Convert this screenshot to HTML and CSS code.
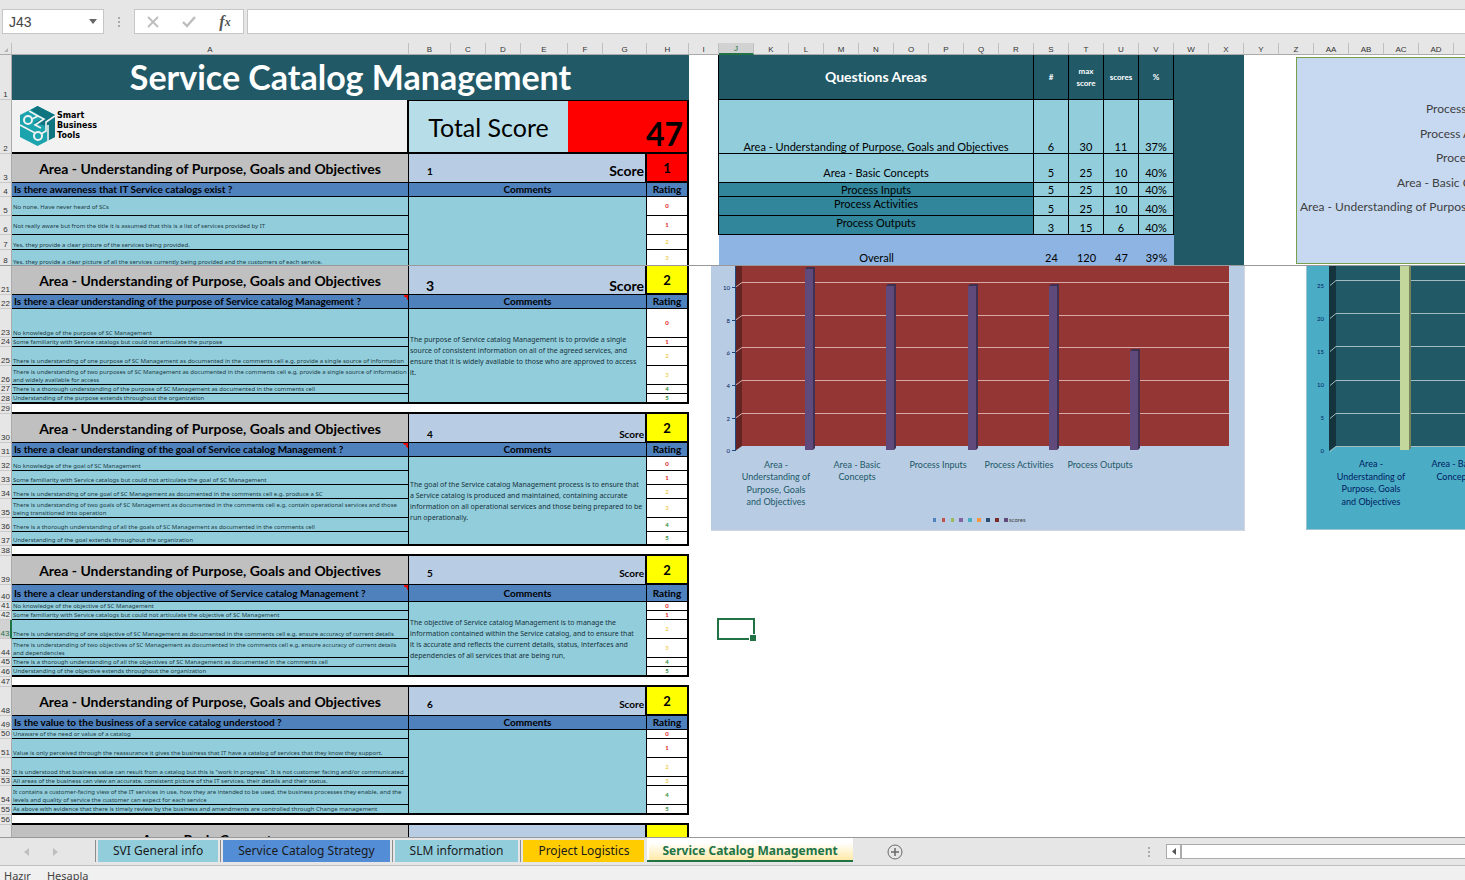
FILE: index.html
```html
<!DOCTYPE html>
<html lang="en">
<head>
    <meta charset="UTF-8">
    <meta name="viewport" content="width=device-width, initial-scale=1.0">
    <title>Service Catalog Management</title>
    <link rel="stylesheet" href="styles.css">
</head>
<body>
    <!-- Formula bar -->
    <header class="formula-bar">
        <div class="name-box">
            <input type="text" value="J43" aria-label="Name box">
            <button type="button" class="name-toggle" aria-label="Open name list"><svg width="8" height="5" viewBox="0 0 8 5"><path d="M0 0h8L4 5z" fill="#666"/></svg></button>
        </div>
        <svg class="grip" width="2" height="10" viewBox="0 0 2 10"><path d="M0 0h2v2H0zM0 4h2v2H0zM0 8h2v2H0z" fill="#aaa"/></svg>
        <div class="formula-buttons">
            <button type="button" aria-label="Cancel"><svg width="12" height="12" viewBox="0 0 12 12"><path d="M1 1l10 10M11 1L1 11" stroke="#bdbdbd" stroke-width="1.8"/></svg></button>
            <button type="button" aria-label="Enter"><svg width="14" height="12" viewBox="0 0 14 12"><path d="M1 6l4 4 8-9" fill="none" stroke="#bdbdbd" stroke-width="2.4"/></svg></button>
            <button type="button" class="fx" aria-label="Insert function"><i>f</i><sub>x</sub></button>
        </div>
        <input type="text" class="formula-input" aria-label="Formula">
    </header>

    <!-- Frozen rows -->
    <section class="pane frozen">
        <table class="sheet wide">
            <colgroup>
                <col class="w-num"><col class="w-a"><col class="w-b"><col class="w-c"><col class="w-c"><col class="w-e"><col class="w-c"><col class="w-g"><col class="w-b"><col class="w-i">
                <col class="w-c" span="22">
            </colgroup>
            <thead>
                <tr class="letters">
                    <th class="corner"><svg width="4" height="4" viewBox="0 0 4 4"><path d="M4 0v4H0z" fill="#b5b5b5"/></svg></th>
                    <th>A</th><th>B</th><th>C</th><th>D</th><th>E</th><th>F</th><th>G</th><th>H</th><th>I</th>
                    <th class="active">J</th><th>K</th><th>L</th><th>M</th><th>N</th><th>O</th><th>P</th><th>Q</th><th>R</th>
                    <th>S</th><th>T</th><th>U</th><th>V</th><th>W</th><th>X</th><th>Y</th><th>Z</th>
                    <th>AA</th><th>AB</th><th>AC</th><th>AD</th><th></th>
                </tr>
            </thead>
            <tbody>
                <tr class="h45">
                    <th>1</th>
                    <td class="title" colspan="8">Service Catalog Management</td>
                    <td class="edge"></td>
                    <td class="q-head q-title" colspan="9">Questions Areas</td>
                    <td class="q-head">#</td><td class="q-head">max score</td><td class="q-head">scores</td><td class="q-head">%</td>
                    <td class="q-side" colspan="2" rowspan="8"></td>
                </tr>
                <tr class="h54">
                    <th>2</th>
                    <td class="brand">
                        <div class="logo">
                            <svg width="37" height="40" viewBox="0 0 37 40">
                                <path d="M18.500 0L36 9v22L18.500 40 1 31V9z" fill="#1ba3ae"/>
                                <path d="M12 4l6.500-4L36 9v22l-8 4V20l-13-3 9-5z" fill="#0e7480"/>
                                <path d="M13 13l6-3 6 3-9 6 6 3M10 5l9 5M1 19l17 9M22 28l5-3V16l9-6M29 19v17" fill="none" stroke="#f2f2f2" stroke-width="1.600"/>
                                <circle cx="9" cy="14" r="4" fill="#1ba3ae" stroke="#f2f2f2" stroke-width="2"/>
                                <circle cx="19" cy="30" r="4" fill="#1ba3ae" stroke="#f2f2f2" stroke-width="2"/>
                            </svg>
                            <span>Smart<br>Business<br>Tools</span>
                        </div>
                    </td>
                    <td class="total" colspan="4">Total Score</td>
                    <td class="total-value" colspan="3">47</td>
                    <td class="edge"></td>
                    <td class="q-name" colspan="9">Area - Understanding of Purpose, Goals and Objectives</td>
                    <td class="q-num">6</td><td class="q-num">30</td><td class="q-num">11</td><td class="q-num">37%</td>
                </tr>
                <tr class="h29 lifted">
                    <th>3</th>
                    <td class="area">Area - Understanding of Purpose, Goals and Objectives</td>
                    <td class="band number">1</td><td class="band score big" colspan="5">Score</td><td class="value red">1</td>
                    <td class="edge"></td>
                    <td class="q-name" colspan="9">Area - Basic Concepts</td>
                    <td class="q-num">5</td><td class="q-num">25</td><td class="q-num">10</td><td class="q-num">40%</td>
                </tr>
                <tr class="h14">
                    <th>4</th>
                    <td class="question">Is there awareness that IT Service catalogs exist ?</td>
                    <td class="caption" colspan="6">Comments</td><td class="caption rating-head">Rating</td>
                    <td class="edge"></td>
                    <td class="q-name q-dark" colspan="9">Process Inputs</td>
                    <td class="q-num">5</td><td class="q-num">25</td><td class="q-num">10</td><td class="q-num">40%</td>
                </tr>
                <tr class="h19">
                    <th>5</th>
                    <td class="answer middle">No none. Have never heard of SCs</td>
                    <td class="comment" colspan="6" rowspan="4"></td><td class="rating r-low">0</td>
                    <td class="edge"></td>
                    <td class="q-name q-dark" colspan="9">Process Activities</td>
                    <td class="q-num">5</td><td class="q-num">25</td><td class="q-num">10</td><td class="q-num">40%</td>
                </tr>
                <tr class="h19">
                    <th>6</th>
                    <td class="answer middle">Not really aware but from the title it is assumed that this is a list of services provided by IT</td>
                    <td class="rating r-low">1</td>
                    <td class="edge"></td>
                    <td class="q-name q-dark" colspan="9">Process Outputs</td>
                    <td class="q-num">3</td><td class="q-num">15</td><td class="q-num">6</td><td class="q-num">40%</td>
                </tr>
                <tr class="h15">
                    <th>7</th>
                    <td class="answer">Yes, they provide a clear picture of the services being provided.</td>
                    <td class="rating r-mid">2</td>
                    <td></td>
                    <td class="q-total" colspan="9" rowspan="2">Overall</td>
                    <td class="q-total" rowspan="2">24</td><td class="q-total" rowspan="2">120</td><td class="q-total" rowspan="2">47</td><td class="q-total" rowspan="2">39%</td>
                </tr>
                <tr class="h16">
                    <th>8</th>
                    <td class="answer last-frozen">Yes, they provide a clear picture of all the services currently being provided and the customers of each service.</td>
                    <td class="rating r-mid last-frozen">3</td>
                    <td></td>
                </tr>
            </tbody>
        </table>
        <svg class="chart chart-areas" width="200" height="207" viewBox="0 0 200 207">
            <rect x="0.500" y="0.500" width="220" height="206" fill="#c6d9f1" stroke="#77a04a"/>
            <text x="130" y="56">Process Outputs</text>
            <text x="124" y="81">Process Activities</text>
            <text x="140" y="105">Process Inputs</text>
            <text x="101" y="130">Area - Basic Concepts</text>
            <text x="4" y="154">Area - Understanding of Purpose, Goals and Objectives</text>
        </svg>
    </section>

    <!-- Scrolling rows -->
    <main class="pane scrolling">
        <table class="sheet">
            <colgroup>
                <col class="w-num"><col class="w-a"><col class="w-b"><col class="w-c"><col class="w-c"><col class="w-e"><col class="w-c"><col class="w-g"><col class="w-b">
            </colgroup>
            <tbody>
                <tr class="h29"><th>21</th><td class="area">Area - Understanding of Purpose, Goals and Objectives</td><td class="band number big">3</td><td class="band score big" colspan="5">Score</td><td class="value">2</td></tr>
                <tr class="h14"><th>22</th><td class="question noted">Is there a clear understanding of the purpose of Service catalog Management ?</td><td class="caption" colspan="6">Comments</td><td class="caption rating-head">Rating</td></tr>
                <tr class="h29"><th>23</th><td class="answer">No knowledge of the purpose of SC Management</td><td class="comment close" colspan="6" rowspan="6">The purpose of Service catalog Management is to provide a single source of consistent information on all of the agreed services, and ensure that it is widely available to those who are approved to access it.</td><td class="rating r-low">0</td></tr>
                <tr class="h9"><th>24</th><td class="answer">Some familiarity with Service catalogs but could not articulate the purpose</td><td class="rating r-low">1</td></tr>
                <tr class="h19"><th>25</th><td class="answer">There is understanding of one purpose of SC Management as documented in the comments cell e.g, provide a single source of information</td><td class="rating r-mid">2</td></tr>
                <tr class="h19"><th>26</th><td class="answer">There is understanding of two purposes of SC Management as documented in the comments cell e.g, provide a single source of information and widely available for access</td><td class="rating r-mid">3</td></tr>
                <tr class="h9"><th>27</th><td class="answer">There is a thorough understanding of the purpose of SC Management as documented in the comments cell</td><td class="rating r-high">4</td></tr>
                <tr class="h10"><th>28</th><td class="answer close">Understanding of the purpose extends throughout the organization</td><td class="rating r-high close">5</td></tr>
                <tr class="h10"><th>29</th><td class="gap" colspan="8"></td></tr>

                <tr class="h29"><th>30</th><td class="area">Area - Understanding of Purpose, Goals and Objectives</td><td class="band number">4</td><td class="band score" colspan="5">Score</td><td class="value">2</td></tr>
                <tr class="h14"><th>31</th><td class="question noted">Is there a clear understanding of the goal of Service catalog Management ?</td><td class="caption" colspan="6">Comments</td><td class="caption rating-head">Rating</td></tr>
                <tr class="h14"><th>32</th><td class="answer">No knowledge of the goal of SC Management</td><td class="comment close" colspan="6" rowspan="6">The goal of the Service catalog Management process is to ensure that a Service catalog is produced and maintained, containing accurate information on all operational services and those being prepared to be run operationally.</td><td class="rating r-low">0</td></tr>
                <tr class="h14"><th>33</th><td class="answer">Some familiarity with Service catalogs but could not articulate the goal of SC Management</td><td class="rating r-low">1</td></tr>
                <tr class="h14"><th>34</th><td class="answer">There is understanding of one goal of SC Management as documented in the comments cell e.g, produce a SC</td><td class="rating r-mid">2</td></tr>
                <tr class="h19"><th>35</th><td class="answer">There is understanding of two goals of SC Management as documented in the comments cell e.g, contain operational services and those being transitioned into operation</td><td class="rating r-mid">3</td></tr>
                <tr class="h14"><th>36</th><td class="answer">There is a thorough understanding of all the goals of SC Management as documented in the comments cell</td><td class="rating r-high">4</td></tr>
                <tr class="h14"><th>37</th><td class="answer close">Understanding of the goal extends throughout the organization</td><td class="rating r-high close">5</td></tr>
                <tr class="h10"><th>38</th><td class="gap" colspan="8"></td></tr>

                <tr class="h29 lifted"><th>39</th><td class="area">Area - Understanding of Purpose, Goals and Objectives</td><td class="band number">5</td><td class="band score" colspan="5">Score</td><td class="value">2</td></tr>
                <tr class="h17"><th>40</th><td class="question noted">Is there a clear understanding of the objective of Service catalog Management ?</td><td class="caption" colspan="6">Comments</td><td class="caption rating-head">Rating</td></tr>
                <tr class="h9"><th>41</th><td class="answer">No knowledge of the objective of SC Management</td><td class="comment close" colspan="6" rowspan="6">The objective of Service catalog Management is to manage the information contained within the Service catalog, and to ensure that<br>it is accurate and reflects the current details, status, interfaces and dependencies of all services that are being run,</td><td class="rating r-low">0</td></tr>
                <tr class="h9"><th>42</th><td class="answer">Some familiarity with Service catalogs but could not articulate the objective of SC Management</td><td class="rating r-low">1</td></tr>
                <tr class="h19"><th class="active">43</th><td class="answer">There is understanding of one objective of SC Management as documented in the comments cell e.g, ensure accuracy of current details</td><td class="rating r-mid">2</td></tr>
                <tr class="h19"><th>44</th><td class="answer">There is understanding of two objectives of SC Management as documented in the comments cell e.g, ensure accuracy of current details and dependencies</td><td class="rating r-mid">3</td></tr>
                <tr class="h9"><th>45</th><td class="answer">There is a thorough understanding of all the objectives of SC Management as documented in the comments cell</td><td class="rating r-high">4</td></tr>
                <tr class="h10"><th>46</th><td class="answer close">Understanding of the objective extends throughout the organization</td><td class="rating r-high close">5</td></tr>
                <tr class="h10"><th>47</th><td class="gap" colspan="8"></td></tr>

                <tr class="h29 lifted"><th>48</th><td class="area">Area - Understanding of Purpose, Goals and Objectives</td><td class="band number">6</td><td class="band score" colspan="5">Score</td><td class="value">2</td></tr>
                <tr class="h14"><th>49</th><td class="question">Is the value to the business of a service catalog understood ?</td><td class="caption" colspan="6">Comments</td><td class="caption rating-head">Rating</td></tr>
                <tr class="h9"><th>50</th><td class="answer">Unaware of the need or value of a catalog</td><td class="comment close" colspan="6" rowspan="6"></td><td class="rating r-low">0</td></tr>
                <tr class="h19"><th>51</th><td class="answer">Value is only perceived through the reassurance it gives the business that IT have a catalog of services that they know they support.</td><td class="rating r-low">1</td></tr>
                <tr class="h19"><th>52</th><td class="answer">It is understood that business value can result from a catalog but this is "work in progress". It is not customer facing and/or communicated</td><td class="rating r-mid">2</td></tr>
                <tr class="h9"><th>53</th><td class="answer">All areas of the business can view an accurate, consistent picture of the IT services, their details and their status.</td><td class="rating r-mid">3</td></tr>
                <tr class="h19"><th>54</th><td class="answer">It contains a customer-facing view of the IT services in use, how they are intended to be used, the business processes they enable, and the levels and quality of service the customer can expect for each service</td><td class="rating r-high">4</td></tr>
                <tr class="h10"><th>55</th><td class="answer close">As above with evidence that there is timely review by the business and amendments are controlled through Change management</td><td class="rating r-high close">5</td></tr>
                <tr class="h10"><th>56</th><td class="gap" colspan="8"></td></tr>

                <tr class="h29"><th></th><td class="area">Area - Basic Concepts</td><td class="band number"></td><td class="band score" colspan="5"></td><td class="value"></td></tr>
            </tbody>
        </table>

        <!-- Scores chart -->
        <svg class="chart chart-scores" width="534" height="265" viewBox="0 0 534 265">
            <rect width="534" height="265" fill="#b8cce4"/>
            <path d="M0 264.500h533.500V0" fill="none" stroke="#d3d6dc"/>
            <path d="M24 0h7v180l-7 5z" fill="#632423"/>
            <rect x="31" y="0" width="487" height="180" fill="#943634"/>
            <path d="M24 21.500l7-5h487M24 54.500l7-5h487M24 86.500l7-5h487M24 119.500l7-5h487M24 152.500l7-5h487" fill="none" stroke="#d9a9a8"/>
            <path d="M24.500 0v185M21 21.500h3M21 54.500h3M21 86.500h3M21 119.500h3M21 152.500h3M21 184.500h3" fill="none" stroke="#1f497d"/>
            <g fill="#403152">
                <path d="M94 3l2-2h8v181l-2 2z"/><path d="M175 20l2-2h8v164l-2 2z"/><path d="M257 20l2-2h8v164l-2 2z"/><path d="M338 20l2-2h8v164l-2 2z"/><path d="M419 85l2-2h8v99l-2 2z"/>
            </g>
            <g fill="#604a7b">
                <rect x="94" y="3" width="8" height="181"/><rect x="175" y="20" width="8" height="164"/><rect x="257" y="20" width="8" height="164"/><rect x="338" y="20" width="8" height="164"/><rect x="419" y="85" width="8" height="99"/>
            </g>
            <g class="ticks navy" text-anchor="end">
                <text x="19" y="24">10</text><text x="19" y="57">8</text><text x="19" y="89">6</text><text x="19" y="122">4</text><text x="19" y="155">2</text><text x="19" y="187">0</text>
            </g>
            <g class="labels teal" text-anchor="middle">
                <text x="65" y="202">Area -</text><text x="65" y="214">Understanding of</text><text x="65" y="227">Purpose, Goals</text><text x="65" y="239">and Objectives</text>
                <text x="146" y="202">Area - Basic</text><text x="146" y="214">Concepts</text>
                <text x="227" y="202">Process Inputs</text>
                <text x="308" y="202">Process Activities</text>
                <text x="389" y="202">Process Outputs</text>
            </g>
            <rect x="222" y="252" width="3" height="4" fill="#4f81bd"/><rect x="231" y="252" width="3" height="4" fill="#c0504d"/><rect x="240" y="252" width="3" height="4" fill="#9bbb59"/><rect x="248" y="252" width="4" height="4" fill="#8064a2"/><rect x="257" y="252" width="4" height="4" fill="#4bacc6"/><rect x="266" y="252" width="4" height="4" fill="#f79646"/><rect x="275" y="252" width="4" height="4" fill="#2c4d75"/><rect x="284" y="252" width="4" height="4" fill="#772c2a"/><rect x="293" y="252" width="4" height="4" fill="#604a7b"/>
            <text class="legend" x="298" y="256">scores</text>
        </svg>

        <!-- Max score chart -->
        <svg class="chart chart-max" width="200" height="264" viewBox="0 0 200 264">
            <rect width="200" height="264" fill="#4bacc6"/>
            <path d="M0.500 0v263.500H200" fill="none" stroke="#9fc5d3"/>
            <path d="M23 0h7v180l-7 5z" fill="#14353d"/>
            <rect x="30" y="0" width="170" height="180" fill="#215967"/>
            <path d="M24 19.500l6-5h170M24 52.500l6-5h170M24 85.500l6-5h170M24 119.500l6-5h170M24 152.500l6-5h170M24 185.500l6-5h170" fill="none" stroke="#a3bcc2"/>
            <path d="M103 0h2v182l-2 2z" fill="#77845c"/>
            <rect x="94" y="0" width="9" height="184" fill="#c3d69b"/>
            <g class="ticks navy" text-anchor="end">
                <text x="18" y="22">25</text><text x="18" y="55">20</text><text x="18" y="88">15</text><text x="18" y="121">10</text><text x="18" y="154">5</text><text x="18" y="187">0</text>
            </g>
            <g class="labels navy" text-anchor="middle">
                <text x="65" y="201">Area -</text><text x="65" y="214">Understanding of</text><text x="65" y="226">Purpose, Goals</text><text x="65" y="239">and Objectives</text>
                <text x="149" y="201">Area - Basic</text><text x="149" y="214">Concepts</text>
            </g>
        </svg>

        <div class="selection"></div>
    </main>

    <!-- Sheet tabs -->
    <nav class="tab-bar">
        <button type="button" class="tab-arrow" aria-label="Previous sheet"><svg width="5" height="8" viewBox="0 0 5 8"><path d="M5 0v8L0 4z" fill="#bfbfbf"/></svg></button>
        <button type="button" class="tab-arrow next" aria-label="Next sheet"><svg width="5" height="8" viewBox="0 0 5 8"><path d="M0 0v8l5-4z" fill="#bfbfbf"/></svg></button>
        <a class="tab aqua" href="#">SVI General info</a>
        <a class="tab blue" href="#">Service Catalog Strategy</a>
        <a class="tab aqua" href="#">SLM information</a>
        <a class="tab gold" href="#">Project Logistics</a>
        <a class="tab current" href="#">Service Catalog Management</a>
        <button type="button" class="add-sheet" aria-label="New sheet"><svg width="16" height="16" viewBox="0 0 16 16"><circle cx="8" cy="8" r="7" fill="none" stroke="#6a6a6a"/><path d="M8 4v8M4 8h8" stroke="#6a6a6a" stroke-width="1.500"/></svg></button>
        <svg class="grip tab-grip" width="2" height="10" viewBox="0 0 2 10"><path d="M0 0h2v2H0zM0 4h2v2H0zM0 8h2v2H0z" fill="#aaa"/></svg>
        <div class="h-scroll">
            <button type="button" aria-label="Scroll left"><svg width="4" height="7" viewBox="0 0 4 7"><path d="M4 0v7L0 3.500z" fill="#555"/></svg></button>
        </div>
    </nav>

    <footer class="status-bar">
        <span>Hazır</span>
        <span>Hesapla</span>
    </footer>
</body>
</html>
```
FILE: styles.css
```css
:root {
    --chrome: #e6e6e6;
    --chrome-line: #ababab;
    --petrol: #215967;
    --aqua: #92cddc;
    --teal: #31869b;
    --band: #b8cce4;
    --blue: #4f81bd;
    --green: #217346;
}

* {
    box-sizing: border-box;
}

body {
    margin: 0;
    height: 100vh;
    display: flex;
    flex-direction: column;
    overflow: hidden;
    background-color: #fff;
    color: #000;
    font-family: Lato, "Noto Sans", sans-serif;
    font-variant-ligatures: none;
}

button {
    margin: 0;
    padding: 0;
    border: 0;
    background: none;
    display: flex;
    align-items: center;
    justify-content: center;
}

/* Formula bar */
.formula-bar {
    flex: none;
    display: flex;
    align-items: center;
    height: 43px;
    padding-left: 2px;
    background-color: var(--chrome);
}

.name-box,
.formula-buttons,
.formula-input {
    height: 25px;
    border: 1px solid #c6c6c6;
    background-color: #fff;
}

.name-box {
    display: flex;
    width: 102px;
}

.name-box input {
    flex: 1;
    min-width: 0;
    padding: 0 6px;
    border: 0;
    outline: 0;
    background: none;
    color: #444;
    font: 14px "Liberation Sans", sans-serif;
}

.name-toggle {
    width: 20px;
}

.grip {
    flex: none;
    margin: 0 14px;
}

.formula-buttons {
    display: flex;
    width: 110px;
    margin-right: 3px;
}

.formula-buttons button {
    flex: 1;
}

.fx {
    color: #555;
    font: bold 16px "Liberation Serif", serif;
}

.fx sub {
    font-size: 12px;
    font-style: italic;
    line-height: 8px;
}

.formula-input {
    flex: 1;
    min-width: 0;
    border-right: 0;
    outline: 0;
}

/* Sheet grid */
.pane {
    position: relative;
    overflow: hidden;
}

.frozen {
    flex: none;
}

.frozen::after {
    content: "";
    position: absolute;
    left: 0;
    right: 0;
    bottom: 0;
    height: 1px;
    background-color: #999;
}

.scrolling {
    flex: 1;
    min-height: 0;
}

.sheet {
    table-layout: fixed;
    width: 689px;
    border-collapse: separate;
    border-spacing: 0;
}

.sheet.wide {
    width: 1489px;
}

.w-num { width: 12px; }
.w-a { width: 397px; }
.w-b { width: 42px; }
.w-c { width: 35px; }
.w-e { width: 47px; }
.w-g { width: 44px; }
.w-i { width: 30px; }

.h9 { height: 9px; }
.h10 { height: 10px; }
.h14 { height: 14px; }
.h15 { height: 15px; }
.h16 { height: 16px; }
.h17 { height: 17px; }
.h19 { height: 19px; }
.h29 { height: 29px; }
.h45 { height: 45px; }
.h54 { height: 54px; }

.sheet th,
.sheet td {
    padding: 0;
    overflow: hidden;
}

.sheet th {
    border-right: 1px solid var(--chrome-line);
    border-bottom: 1px solid #c9c9c9;
    background-color: var(--chrome);
    color: #333;
    font: 8px/8px "Liberation Sans", sans-serif;
    text-align: center;
    vertical-align: bottom;
    white-space: nowrap;
}

.sheet tbody th.active {
    border-right: 2px solid var(--green);
    background-color: #d2d2d2;
    color: var(--green);
}

.sheet .letters th {
    height: 12px;
    border-right-color: #c0c0c0;
    border-bottom-color: var(--chrome-line);
}

.sheet .letters th.active {
    border-bottom: 2px solid var(--green);
    background-color: #d2d2d2;
    color: var(--green);
}

.sheet .title {
    padding-bottom: 2px;
    background-color: var(--petrol);
    color: #fff;
    font-size: 34px;
    line-height: 40px;
    font-weight: bold;
    text-align: center;
}

.brand {
    border-right: 2px solid #000;
    border-bottom: 2px solid #000;
    background-color: #f2f2f2;
}

.logo {
    display: flex;
    align-items: center;
    gap: 1px;
    padding-left: 7px;
    font: bold 8px/10px "DejaVu Sans", sans-serif;
}

.sheet .total,
.sheet .total-value {
    border-top: 1px solid #000;
    border-bottom: 2px solid #000;
}

.total {
    background-color: #b7dee8;
    font-size: 25px;
    text-align: center;
}

.sheet .total-value {
    padding-right: 4px;
    border-right: 2px solid #000;
    background-color: #f00;
    font-size: 32px;
    line-height: 36px;
    font-weight: bold;
    text-align: right;
    vertical-align: bottom;
}

.sheet .area {
    padding-top: 2px;
    border-right: 1px solid #000;
    border-bottom: 1px solid #000;
    background-color: #c0c0c0;
    font-size: 14px;
    line-height: 20px;
    font-weight: bold;
    text-align: center;
}

.band {
    border-bottom: 1px solid #000;
    background-color: var(--band);
    font-size: 10px;
    line-height: 16px;
    font-weight: bold;
    vertical-align: bottom;
}

.band.big {
    font-size: 14px;
}

.number {
    text-align: center;
}

.sheet .score {
    padding-right: 1px;
    border-right: 2px solid #000;
    text-align: right;
}

.value {
    border-right: 2px solid #000;
    border-bottom: 2px solid #000;
    background-color: #ff0;
    font-size: 13px;
    line-height: 16px;
    font-weight: bold;
    text-align: center;
}

.value.red {
    background-color: #f00;
}

.question,
.caption {
    border-right: 1px solid #000;
    border-bottom: 1px solid #000;
    background-color: var(--blue);
    font-size: 10px;
    line-height: 11px;
    font-weight: bold;
}

.sheet .question {
    padding-left: 2px;
}

/* red corner marking a cell note */
.noted {
    background-image: linear-gradient(45deg, transparent 50%, #e01010 50%);
    background-repeat: no-repeat;
    background-position: right top;
    background-size: 5px 5px;
}

.caption {
    text-align: center;
}

.sheet .rating-head {
    border-right-width: 2px;
}

.answer {
    border-right: 1px solid #000;
    border-bottom: 1px solid #000;
    background-color: var(--aqua);
    color: #1d3c46;
    font-family: "Noto Sans", sans-serif;
    font-size: 6px;
    line-height: 8px;
    vertical-align: bottom;
}

.sheet .answer {
    padding-left: 1px;
}

.sheet .middle {
    padding-top: 2px;
    vertical-align: middle;
}

.sheet .comment {
    padding: 0 2px 0 1px;
}

.comment {
    border-right: 1px solid #000;
    background-color: var(--aqua);
    color: #16323b;
    font-family: "Noto Sans", sans-serif;
    font-size: 7px;
    line-height: 11px;
}

.rating {
    border-right: 2px solid #000;
    border-bottom: 1px solid #000;
    background-color: #fff;
    font-size: 6px;
    line-height: 8px;
    font-weight: bold;
    text-align: center;
}

.r-low { color: #e02020; }
.r-mid { color: #f0d060; }
.r-high { color: #2e8b3a; }

.sheet .close {
    border-bottom: 2px solid #000;
}

.gap {
    border-bottom: 2px solid #000;
}

.sheet .last-frozen {
    border-bottom: 0;
}

/* Question areas table */
.edge {
    border-right: 1px solid #000;
}

.q-head {
    border-right: 1px solid #000;
    border-bottom: 1px solid #000;
    background-color: var(--petrol);
    color: #fff;
    font-size: 8px;
    line-height: 12px;
    font-weight: bold;
    text-align: center;
}

.q-title {
    font-size: 14px;
}

.q-name,
.q-num {
    border-right: 1px solid #000;
    border-bottom: 1px solid #000;
    background-color: var(--aqua);
    font-size: 11px;
    line-height: 13px;
    text-align: center;
    vertical-align: bottom;
}

.q-dark {
    background-color: var(--teal);
    vertical-align: top;
}

.sheet .q-total {
    padding-bottom: 2px;
    background-color: #8db4e2;
    font-size: 11px;
    line-height: 13px;
    text-align: center;
    vertical-align: bottom;
}

.q-side {
    background-color: var(--petrol);
}

/* rows whose bottom-aligned text sits higher */
.sheet .lifted .band,
.sheet .lifted .q-name,
.sheet .lifted .q-num {
    padding-bottom: 3px;
}

/* Charts float over the cells */
.chart {
    position: absolute;
    display: block;
}

.chart-areas {
    top: 14px;
    left: 1296px;
    fill: #404040;
    font-size: 12px;
}

.chart-scores {
    top: 0;
    left: 711px;
}

.chart-max {
    top: 0;
    left: 1306px;
}

.ticks {
    font-size: 6px;
}

.labels {
    font-size: 9px;
}

.legend {
    font-size: 6px;
    fill: #404040;
}

.navy { fill: #002060; }
.teal { fill: #215967; }

.selection {
    position: absolute;
    top: 352px;
    left: 717px;
    width: 38px;
    height: 22px;
    border: 2px solid var(--green);
}

.selection::after {
    content: "";
    position: absolute;
    right: -3px;
    bottom: -3px;
    width: 6px;
    height: 6px;
    border: 1px solid #fff;
    border-width: 1px 0 0 1px;
    background-color: var(--green);
}

/* Sheet tabs */
.tab-bar {
    flex: none;
    display: flex;
    align-items: center;
    height: 29px;
    border-top: 1px solid #999;
    border-bottom: 1px solid #c0c0c0;
    background-color: var(--chrome);
    font-family: "Noto Sans", sans-serif;
    font-size: 12px;
}

.tab-arrow {
    width: 5px;
    margin-left: 24px;
}

.tab-arrow.next {
    margin-right: 38px;
}

.tab {
    height: 22px;
    margin: 0 1px 2px 0;
    padding: 0 15px;
    border: 1px solid var(--chrome);
    border-width: 0 2px;
    color: #1a1a1a;
    line-height: 21px;
    text-decoration: none;
    white-space: nowrap;
    box-shadow: -1px 0 0 #8c8c8c;
}

.tab.aqua { background: var(--aqua) padding-box; }
.tab.blue { background: #538dd5 padding-box; }
.tab.gold { background: #fc0 padding-box; }

.tab.current {
    align-self: flex-start;
    height: 24px;
    margin: 0;
    padding: 2px 15px 0;
    border: 0;
    border-bottom: 2px solid var(--green);
    background: linear-gradient(#fff 20%, #ffeaa8);
    color: var(--green);
    font-weight: bold;
    box-shadow: inset 2px 0 0 #fff;
}

.add-sheet {
    margin-left: 34px;
}

.tab-grip {
    margin: 0 16px 0 auto;
}

.h-scroll {
    display: flex;
    width: 299px;
    height: 15px;
    border: 1px solid var(--chrome-line);
    border-right: 0;
    background-color: #fff;
}

.h-scroll button {
    width: 15px;
    border-right: 2px solid var(--chrome-line);
}

/* Status bar */
.status-bar {
    flex: none;
    display: flex;
    gap: 16px;
    height: 14px;
    padding-left: 4px;
    overflow: hidden;
    background-color: #f0f0f0;
    color: #444;
    font: 11px/20px "Noto Sans", sans-serif;
}
```
